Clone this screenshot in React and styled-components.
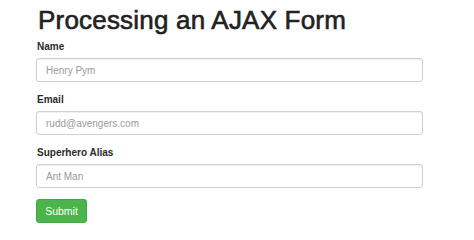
import React from "react";
import styled, { createGlobalStyle } from "styled-components";

const GlobalStyle = createGlobalStyle`
  html, body {
    margin: 0;
    padding: 0;
    background: #fff;
  }
  body {
    font-family: "Liberation Sans", Arial, Helvetica, sans-serif;
    color: #333;
  }
`;

const Page = styled.div`
  width: 387px;
  padding: 6px 0 0 36px;
`;

const Title = styled.h1`
  margin: 0 0 6px 2px;
  font-size: 26px;
  line-height: 28px;
  font-weight: 400;
  letter-spacing: 0.2px;
  color: #222;
  -webkit-text-stroke: 0.6px #222;
`;

const Form = styled.form`
  display: flex;
  flex-direction: column;
  gap: 11px;
`;

const Group = styled.div`
  display: flex;
  flex-direction: column;
  gap: 4px;
`;

const Label = styled.label`
  font-size: 10px;
  line-height: 14px;
  font-weight: 700;
  color: #2b2b2b;
  padding-left: 1px;
`;

const Input = styled.input`
  box-sizing: border-box;
  width: 100%;
  height: 24px;
  padding: 0 9px;
  border: 1px solid #cfcfcf;
  border-radius: 3px;
  box-shadow: inset 0 1px 1px rgba(0, 0, 0, 0.06);
  font-family: "Liberation Sans", Arial, sans-serif;
  font-size: 10px;
  color: #555;
  outline: none;
  &::placeholder {
    color: #9a9a9a;
  }
`;

const Button = styled.button`
  align-self: flex-start;
  box-sizing: border-box;
  width: 51px;
  height: 24px;
  padding: 0;
  border: 1px solid #42a842;
  border-radius: 3px;
  background: #4cb44c;
  color: #fff;
  font-family: "Liberation Sans", Arial, sans-serif;
  font-size: 10.5px;
  cursor: pointer;
`;

const fields = [
  { id: "name", label: "Name", placeholder: "Henry Pym", type: "text" },
  { id: "email", label: "Email", placeholder: "rudd@avengers.com", type: "email" },
  { id: "alias", label: "Superhero Alias", placeholder: "Ant Man", type: "text" },
];

export default function App() {
  return (
    <>
      <GlobalStyle />
      <Page>
        <Title>Processing an AJAX Form</Title>
        <Form onSubmit={(e) => e.preventDefault()}>
          {fields.map((f) => (
            <Group key={f.id}>
              <Label htmlFor={f.id}>{f.label}</Label>
              <Input id={f.id} type={f.type} placeholder={f.placeholder} />
            </Group>
          ))}
          <Button type="submit">Submit</Button>
        </Form>
      </Page>
    </>
  );
}
